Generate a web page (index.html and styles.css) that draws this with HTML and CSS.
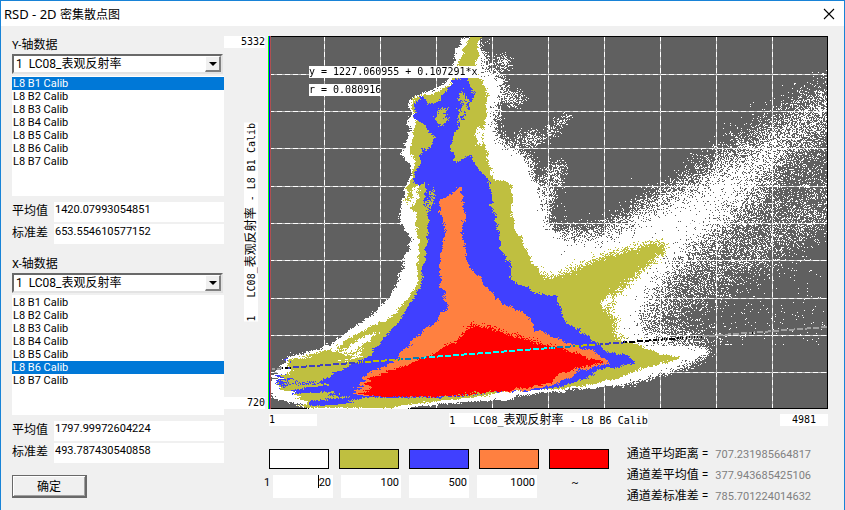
FILE: index.html
```html
<!DOCTYPE html>
<html lang="zh-CN">
<head>
    <meta charset="UTF-8">
    <meta name="viewport" content="width=device-width, initial-scale=1.0">
    <title>RSD - 2D 密集散点图</title>
    <link rel="stylesheet" href="styles.css">
</head>
<body>

    <div class="window">
        <header class="title-bar">
            <h1>RSD - 2D <span class="cjk">密集散点图</span></h1>
            <button class="close-btn" aria-label="关闭">
                <svg width="12" height="12" viewBox="0 0 12 12"><path d="M1 1L11 11M11 1L1 11" stroke="#000" stroke-width="1.1" fill="none"/></svg>
            </button>
        </header>

        <main class="content">
            <!-- 波段选择 -->
            <form class="sidebar">
                <section class="band">
                    <label class="band-title" for="y-file">Y-<span class="cjk">轴数据</span></label>
                    <div class="combo">
                        <select id="y-file"><option>1&nbsp;&nbsp;LC08_表观反射率</option></select>
                        <span class="combo-arrow"></span>
                    </div>
                    <select class="band-list" size="9" aria-label="Y-轴波段">
                        <option selected>L8 B1 Calib</option>
                        <option>L8 B2 Calib</option>
                        <option>L8 B3 Calib</option>
                        <option>L8 B4 Calib</option>
                        <option>L8 B5 Calib</option>
                        <option>L8 B6 Calib</option>
                        <option>L8 B7 Calib</option>
                    </select>
                    <div class="field">
                        <label for="y-mean">平均值</label>
                        <input type="text" id="y-mean" value="1420.07993054851">
                    </div>
                    <div class="field">
                        <label for="y-std">标准差</label>
                        <input type="text" id="y-std" value="653.554610577152">
                    </div>
                </section>

                <section class="band">
                    <label class="band-title" for="x-file">X-<span class="cjk">轴数据</span></label>
                    <div class="combo">
                        <select id="x-file"><option>1&nbsp;&nbsp;LC08_表观反射率</option></select>
                        <span class="combo-arrow"></span>
                    </div>
                    <select class="band-list" size="9" aria-label="X-轴波段">
                        <option>L8 B1 Calib</option>
                        <option>L8 B2 Calib</option>
                        <option>L8 B3 Calib</option>
                        <option>L8 B4 Calib</option>
                        <option>L8 B5 Calib</option>
                        <option selected>L8 B6 Calib</option>
                        <option>L8 B7 Calib</option>
                    </select>
                    <div class="field">
                        <label for="x-mean">平均值</label>
                        <input type="text" id="x-mean" value="1797.99972604224">
                    </div>
                    <div class="field">
                        <label for="x-std">标准差</label>
                        <input type="text" id="x-std" value="493.787430540858">
                    </div>
                </section>

                <button type="button" class="ok-btn">确定</button>
            </form>

            <!-- 散点图 -->
            <section class="chart">
                <div class="y-axis">
                    <span class="tick">5332</span>
                    <span class="axis-label vertical">1   LC08_<span class="cjk">表观反射率</span> - L8 B1 Calib</span>
                    <span class="tick">720</span>
                </div>
                <div class="plot">
                    <canvas id="scatter" width="560" height="373"></canvas>
                    <div class="formula">
                        <span>y = 1227.060955 + 0.107291*x</span>
                        <span>r = 0.080916</span>
                    </div>
                </div>
                <div class="x-axis">
                    <span class="tick">1</span>
                    <span class="axis-label">1   LC08_<span class="cjk">表观反射率</span> - L8 B6 Calib</span>
                    <span class="tick last">4981</span>
                </div>

                <div class="bottom">
                    <div class="legend">
                        <div class="swatches">
                            <span class="swatch white"></span>
                            <span class="swatch olive"></span>
                            <span class="swatch blue"></span>
                            <span class="swatch orange"></span>
                            <span class="swatch red"></span>
                        </div>
                        <div class="limits">
                            <label class="from" for="limit-1">1</label>
                            <input class="active" type="text" id="limit-1" value="20">
                            <input type="text" value="100" aria-label="级别 2">
                            <input type="text" value="500" aria-label="级别 3">
                            <input type="text" value="1000" aria-label="级别 4">
                            <span class="rest">~</span>
                        </div>
                    </div>
                    <dl class="stats">
                        <dt>通道平均距离 =</dt><dd>707.231985664817</dd>
                        <dt>通道差平均值 =</dt><dd>377.943685425106</dd>
                        <dt>通道差标准差 =</dt><dd>785.701224014632</dd>
                    </dl>
                </div>
            </section>
        </main>
    </div>

    <script src="scatter.js"></script>
</body>
</html>
```
FILE: styles.css
```css
* {
    box-sizing: border-box;
}
body {
    margin: 0;
    font-family: Roboto, "Noto Sans CJK SC", sans-serif;
    font-size: 11px;
    line-height: 12px;
    color: #000;
    background-color: #f0f0f0;
}
input, select, button {
    font-family: inherit;
    font-size: 11px;
    color: #000;
    border: none;
    border-radius: 0;
    outline: none;
}
.cjk {
    font-family: "Noto Sans CJK SC", sans-serif;
    font-size: 12px;
}
.window {
    min-height: 100vh;
    border: 1px solid #1883d7;
}

/* title bar */
.title-bar {
    display: flex;
    justify-content: space-between;
    align-items: center;
    height: 25px;
    padding: 0 9px 0 3px;
    background-color: #fff;
}
.title-bar h1 {
    margin: 0;
    font-family: "Noto Sans", "Noto Sans CJK SC", sans-serif;
    font-size: 13px;
    font-weight: normal;
    line-height: 22px;
}
.close-btn {
    display: flex;
    padding: 0;
    background: none;
}

.content {
    display: grid;
    grid-template-columns: 212px 1fr;
    padding: 10px 15px 4px 11px;
}

/* left column */
.band {
    display: flex;
    flex-direction: column;
    height: 219px;
}
.band-title {
    height: 12px;
    margin: 2px 0 4px;
    line-height: 12px;
}
.combo {
    position: relative;
    height: 20px;
    margin-right: 1px;
    border: 2px solid #696969;
    border-right-color: #e3e3e3;
    border-bottom-color: #e3e3e3;
    background-color: #fff;
}
.combo select {
    display: block;
    width: 100%;
    height: 16px;
    padding: 0 0 0 2px;
    font-size: 12px;
    line-height: 16px;
    appearance: none;
    background: none;
}
.combo-arrow {
    position: absolute;
    top: 0;
    right: 0;
    width: 16px;
    height: 16px;
    border: 1px solid #fff;
    border-right: 2px solid #808080;
    border-bottom: 2px solid #808080;
    background-color: #f0f0f0;
    pointer-events: none;
}
.combo-arrow::after {
    content: "";
    position: absolute;
    left: 3px;
    top: 5px;
    border: 4px solid transparent;
    border-top-color: #000;
    border-bottom: none;
}
.band-list {
    height: 120px;
    margin: 2px 0 6px;
    padding: 1px 0 0;
    overflow: hidden;
    background-color: #fff;
}
.band-list option {
    min-height: 13px;
    padding: 0 1px;
    line-height: 13px;
}
.band-list option:checked {
    color: #fff;
    background: #0078d7 linear-gradient(#0078d7, #0078d7);
}
.field {
    display: flex;
    margin-bottom: 2px;
}
.field label {
    width: 42px;
    font-size: 12px;
    line-height: 18px;
}
.field input {
    flex: 1;
    min-width: 0;
    height: 20px;
    padding: 0 1px 5px;
    background-color: #fff;
}
.ok-btn {
    width: 75px;
    height: 23px;
    margin-top: 1px;
    padding: 0 0 1px;
    font-size: 12px;
    background-color: #f0f0f0;
    border: 1px solid #696969;
    border-right-width: 2px;
    border-bottom-width: 2px;
    box-shadow: inset 1px 1px #fff, inset -1px -1px #a0a0a0;
}

/* chart */
.chart {
    display: grid;
    grid-template-columns: 44px 1fr;
    align-content: start;
    font-family: "DejaVu Sans Mono", "Noto Sans CJK SC", monospace;
    font-size: 10px;
}
.y-axis {
    display: flex;
    flex-direction: column;
    justify-content: space-between;
    padding-right: 3px;
}
.tick, .axis-label, .formula span {
    background-color: #fff;
    white-space: pre;
    line-height: 12px;
}
.y-axis .tick {
    text-align: right;
}
.axis-label.vertical {
    align-self: flex-end;
    margin-right: 7px;
    writing-mode: vertical-rl;
    text-orientation: sideways;
    transform: rotate(180deg);
}
.plot {
    position: relative;
    border-left: 1px solid #0f0;
}
.plot canvas {
    display: block;
    width: 100%;
    image-rendering: pixelated;
}
.formula {
    position: absolute;
    left: 40px;
    top: 30px;
    display: flex;
    flex-direction: column;
    align-items: flex-start;
    gap: 6px;
}
.x-axis {
    grid-column: 2;
    display: flex;
    justify-content: space-between;
    align-items: center;
    padding: 4px 1px 0;
}
.x-axis .tick {
    width: 48px;
}
.x-axis .tick.last {
    text-align: center;
}

/* legend and statistics */
.bottom {
    grid-column: 2;
    display: flex;
    justify-content: space-between;
    margin-top: 22px;
    padding-left: 1px;
    font-family: Roboto, "Noto Sans CJK SC", sans-serif;
    font-size: 11px;
}
.swatches {
    display: flex;
    gap: 10px;
}
.swatch {
    width: 60px;
    height: 20px;
    border: 1px solid #000;
}
.white { background-color: #fff; }
.olive { background-color: #bfbf40; }
.blue { background-color: #4040ff; }
.orange { background-color: #ff8040; }
.red { background-color: #f00; }
.limits {
    display: flex;
    gap: 8px;
    margin: 6px 0 0 -5px;
    line-height: 15px;
}
.limits input {
    width: 60px;
    height: 23px;
    padding: 0 2px 8px;
    text-align: right;
    background-color: #fff;
}
.limits .from {
    width: 9px;
    margin-right: -8px;
}
.limits .active {
    background: #fff linear-gradient(#000, #000) 45px 0 / 1px 13px no-repeat;
}
.limits .rest {
    width: 60px;
    text-align: center;
}
.stats {
    display: grid;
    grid-template-columns: auto auto;
    column-gap: 7px;
    margin: -5px 18px 0 0;
    line-height: 21px;
}
.stats dt {
    font-size: 12px;
}
.stats dd {
    margin: 0;
    color: #808080;
}
```
FILE: scatter.js
```js
const canvas = document.getElementById('scatter');
const ctx = canvas.getContext('2d');
const W = canvas.width;
const H = canvas.height;

// left / top of the plot inside the dialog, outlines below use dialog coordinates
const LEFT = 269;
const TOP = 36;

const colors = [
    [96, 96, 96],
    [255, 255, 255],
    [191, 191, 64],
    [64, 64, 255],
    [255, 128, 64],
    [255, 0, 0]
];

// density outlines, from the rarest class to the densest
const outlines = [
    // 1 - 20
    [462,37, 458,48, 455,60, 448,80, 436,88, 425,92, 414,98, 408,104, 411,115, 407,122, 411,130, 408,136, 405,146, 399,154,
     408,162, 411,170, 408,180, 405,190, 402,205, 398,215, 402,225, 412,238, 408,250, 403,260, 400,275, 396,285, 390,295,
     383,305, 370,317, 350,330, 335,341, 318,350, 290,356, 283,361, 280,370, 272,378, 271,392, 277,400, 300,404, 303,410,
     400,410, 430,405, 480,401, 510,400, 518,395, 560,391, 590,388, 620,385, 640,381, 665,374, 690,365, 712,352, 703,347,
     690,342, 668,337, 640,328, 648,312, 660,294, 672,278, 686,263, 702,248, 718,234, 736,220, 750,204, 762,182, 780,160,
     800,142, 840,106, 840,86, 815,104, 790,122, 765,137, 738,152, 715,168, 690,183, 665,195, 640,211, 615,226, 590,234,
     562,233, 549,225, 547,205, 541,190, 534,175, 531,160, 520,150, 508,143, 497,132, 496,120, 498,105, 503,90, 504,78,
     490,72, 485,60, 482,50, 480,37],
    // 20 - 100
    [471,36, 463,50, 459,60, 456,75, 447,87, 432,94, 415,98, 411,108, 415,118, 414,135, 412,150, 414,165, 409,185, 406,200,
     416,214, 418,235, 420,250, 418,265, 418,285, 409,297, 400,308, 390,318, 375,324, 355,334, 340,345, 320,353, 300,358,
     286,361, 285,366, 292,371, 280,376, 279,388, 294,392, 302,400, 302,408, 390,408, 402,405, 440,401, 480,396, 510,391,
     570,388, 600,382, 625,376, 640,370, 665,362, 683,357, 660,354, 652,350, 640,345, 624,341, 615,334, 617,322, 609,310,
     612,298, 625,285, 645,270, 660,255, 668,246, 660,242, 640,245, 600,257, 570,270, 552,277, 540,272, 530,258, 522,240,
     515,228, 512,205, 513,185, 505,182, 495,180, 490,165, 485,148, 484,130, 486,110, 488,95, 482,80, 476,70, 478,55, 480,38],
    // 100 - 500
    [453,78, 448,92, 437,102, 428,104, 424,96, 415,104, 414,117, 424,125, 431,138, 424,150, 419,162, 412,180, 415,185,
     427,183, 424,200, 428,212, 427,237, 424,260, 422,283, 407,310, 390,330, 373,352, 363,360, 343,370, 320,382, 330,385,
     292,391, 292,395, 335,391, 322,399, 303,401, 306,406, 337,405, 363,398, 433,398, 480,394, 547,389, 570,384, 590,377,
     597,370, 637,364, 627,355, 607,352, 593,338, 563,320, 556,297, 537,293, 513,280, 510,263, 501,250, 498,230, 493,210,
     488,180, 482,172, 470,155, 456,162, 449,147, 457,130, 467,113, 474,94, 468,78],
    // 500 - 1000
    [460,185, 452,194, 439,200, 440,212, 447,230, 442,245, 440,265, 441,287, 448,307, 433,323, 413,340, 400,353, 387,367,
     363,373, 367,380, 353,393, 363,396, 433,397, 480,393, 520,391, 552,386, 568,378, 580,370, 610,364, 597,353, 577,347,
     557,338, 535,330, 527,315, 500,303, 483,283, 467,262, 462,235, 465,215, 462,200],
    // 1000 ~
    [473,325, 460,337, 447,347, 427,357, 393,370, 373,378, 367,387, 371,390, 361,394, 375,397, 433,397, 500,392, 550,384,
     562,373, 593,365, 606,363, 587,358, 567,350, 540,343, 513,335, 490,328]
];

// spots of a lower class inside the outlines: level, x, y, rx, ry, angle
const holes = [
    [2, 441, 117, 6, 9, 0.5], [2, 462, 112, 3, 13, 0.3], [2, 462, 143, 5, 15, 0.35], [2, 428, 140, 5, 9, 0],
    [2, 463, 97, 3, 6, 0.4], [1, 480, 135, 4, 10, 0], [1, 412, 200, 3, 16, 0.4], [2, 430, 200, 2, 12, 0.2],
    [1, 360, 343, 22, 3, -0.55], [1, 352, 356, 12, 2, -0.5], [1, 335, 349, 8, 1, 0], [1, 500, 170, 3, 10, -0.2],
    [1, 282, 366, 9, 2, 0], [1, 293, 397, 6, 2, 0], [1, 607, 302, 3, 6, 0], [2, 480, 394, 20, 1, -0.05],
    [3, 283, 381, 3, 6, 0.2], [3, 304, 383, 20, 1, 0.05], [3, 288, 361, 2, 2, 0], [2, 330, 397, 14, 2, -0.1]
];

// loose clouds beside the peak: x, y, rx, ry
const clouds = [
    [556, 174, 11, 14], [548, 190, 9, 22], [503, 62, 10, 8], [513, 98, 12, 9], [530, 138, 18, 9],
    [552, 130, 8, 6], [559, 122, 7, 5], [566, 116, 5, 4]
];

let seed = 20180;
function random() {
    seed = (seed * 1664525 + 1013904223) % 4294967296;
    return seed / 4294967296;
}
function gauss() {
    return random() + random() + random() + random() - 2;
}
function clamp(v) {
    return Math.max(0, Math.min(1, v));
}

// smooth noise in the range -1 .. 1
const table = Array.from({ length: 4096 }, () => random() * 2 - 1);
function noise(x, y) {
    const ix = Math.floor(x), iy = Math.floor(y);
    const fx = x - ix, fy = y - iy;
    const at = (a, b) => table[((a & 63) * 64 + (b & 63))];
    const top = at(ix, iy) * (1 - fx) + at(ix + 1, iy) * fx;
    const low = at(ix, iy + 1) * (1 - fx) + at(ix + 1, iy + 1) * fx;
    return top * (1 - fy) + low * fy;
}

function makeMask(draw) {
    const c = document.createElement('canvas');
    c.width = W;
    c.height = H;
    const g = c.getContext('2d');
    g.translate(-LEFT, -TOP);
    g.beginPath();
    draw(g);
    g.fill();
    const data = g.getImageData(0, 0, W, H).data;
    return (x, y) => {
        x = Math.max(0, Math.min(W - 1, Math.round(x)));
        y = Math.max(0, Math.min(H - 1, Math.round(y)));
        return data[(y * W + x) * 4 + 3] > 127;
    };
}

const masks = outlines.map(points => makeMask(g => {
    for (let i = 0; i < points.length; i += 2) {
        g.lineTo(points[i], points[i + 1]);
    }
}));
const holeMasks = holes.map(h => makeMask(g => g.ellipse(h[1], h[2], h[3], h[4], h[5], 0, Math.PI * 2)));

// how far points scatter over the border of a class
function spread(level, x, y) {
    if (level === 0) {
        if (y > 345) {
            return x > 620 ? 5 : 1.6;
        }
        if (x > 560) {
            return 14 + 10 * clamp((x - 620) / 100);
        }
        return x > 480 && y < 300 ? 7 : 1.3;
    }
    if (level === 1) {
        return x > 540 && y < 340 ? 5 : 1.2;
    }
    return level === 4 && y < 345 ? 3 : 1;
}

const levels = new Uint8Array(W * H);
for (let y = 0; y < H; y++) {
    for (let x = 0; x < W; x++) {
        const dx = x + LEFT, dy = y + TOP;
        let wx = noise(dx / 5, dy / 4) * 2.4;
        let wy = noise(dx / 6 + 30, dy / 4 + 11) * 1.6;
        // the lower left part is torn into horizontal strips
        if (dx < 480 && dy > 355) {
            wx = noise(dx / 14, dy / 1.5) * 7;
            wy = noise(dx / 12 + 30, dy / 3) * 0.8;
        }
        let level = 0;
        masks.forEach((mask, i) => {
            const s = spread(i, dx, dy);
            if (mask(x + wx + gauss() * s, y + wy + gauss() * s * (dy > 370 ? 0.6 : 1))) {
                level = i + 1;
            }
        });
        // sparse points at the right of the plume
        if (level === 0 && dx > 630 && dy < 345) {
            const line = 325 - (dx - 640) * 0.62;
            const far = Math.abs(dy - line) / (dy < line ? 120 : 45);
            if (dy > 290 - (dx - 640) && random() < 0.02 + 0.3 * clamp(1 - far) * clamp(1 - far)) {
                level = 1;
            }
        }
        const cloud = Math.min(...clouds.map(c => Math.hypot((dx - c[0]) / c[2], (dy - c[1]) / c[3])));
        if (level === 0 && random() < 0.5 * clamp(1.3 - cloud)) {
            level = 1;
        }
        holeMasks.forEach((mask, i) => {
            if (level > 0 && mask(x + wx * 1.3 + gauss() * 2, y + wy * 1.3 + gauss() * 2)) {
                level = holes[i][0];
            }
        });
        levels[y * W + x] = level;
    }
}

const image = ctx.createImageData(W, H);
function put(x, y, rgb) {
    image.data.set([rgb[0], rgb[1], rgb[2], 255], (y * W + x) * 4);
}

const gridRows = [38, 75, 112, 150, 187, 224, 262, 299, 336];
for (let y = 0; y < H; y++) {
    for (let x = 0; x < W; x++) {
        const level = levels[y * W + x];
        let rgb = colors[level];
        if (level === 0 && (x % 56 === 55 || gridRows.includes(y))) {
            const step = gridRows.includes(y) ? x % 8 : y % 8;
            rgb = step < 5 ? [255, 255, 255] : [192, 192, 192];
        }
        put(x, y, rgb);
    }
}

// regression line, drawn in the inverse of what lies below
for (let x = 3; x < W - 2; x++) {
    if (x % 8 > 5) {
        continue;
    }
    const y = Math.round(332.3 - x * 0.0759);
    const level = levels[y * W + x];
    const rgb = level === 0 ? [160, 160, 160] : colors[level].map(v => 255 - v);
    put(x, y, rgb);
    put(x, y + 1, rgb);
}

// frame
for (let x = 0; x < W; x++) {
    put(x, 0, [0, 0, 0]);
    if (levels[(H - 1) * W + x] === 0) {
        put(x, H - 1, [0, 0, 0]);
    }
}
for (let y = 0; y < H; y++) {
    put(W - 2, y, [0, 0, 0]);
    put(W - 1, y, [240, 240, 240]);
    put(0, y, [0, 0, 255]);
    put(1, y, [176, 80, 80]);
}

ctx.putImageData(image, 0, 0);
```
